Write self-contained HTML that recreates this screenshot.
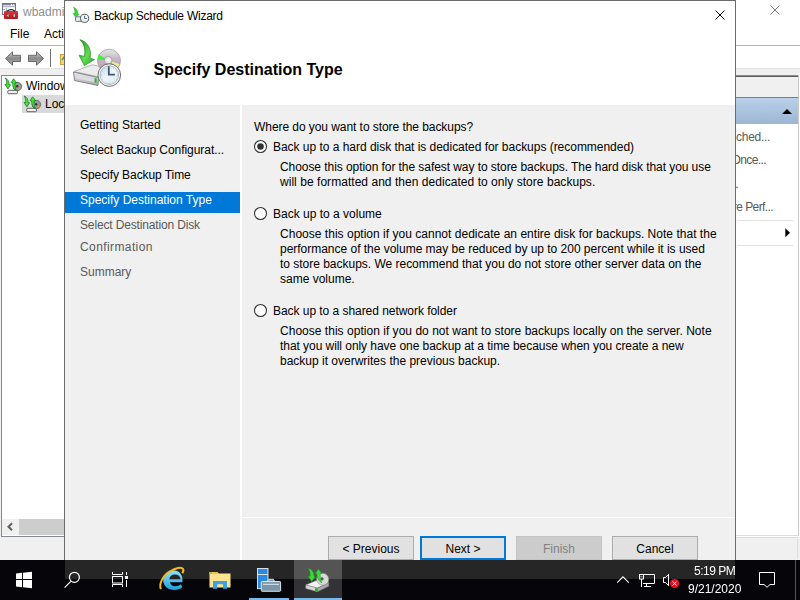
<!DOCTYPE html>
<html><head><meta charset="utf-8">
<style>
*{margin:0;padding:0;box-sizing:border-box}
html,body{width:800px;height:600px;overflow:hidden;background:#fff}
body{position:relative;font-family:"Liberation Sans",sans-serif;font-size:12px;color:#000}
.a{position:absolute}
svg.a{overflow:visible}
.t{position:absolute;white-space:nowrap;line-height:15px;font-size:12px}
.r{position:absolute;white-space:nowrap;line-height:15px;font-size:12px;text-align:right}
.btn{position:absolute;top:536px;width:86px;height:24px;background:#e1e1e1;border:1px solid #adadad;text-align:center;line-height:25px;font-size:12px;color:#000}
.g{color:#595959}
</style></head><body>

<!-- ================= MMC window behind ================= -->
<div class="a" style="left:0;top:0;width:800px;height:560px;background:#fff"></div>
<!-- MMC title icon -->
<svg class="a" style="left:0;top:0" width="24" height="24" viewBox="0 0 24 24">
  <defs><linearGradient id="tbx" x1="0" y1="0" x2="0" y2="1"><stop offset="0" stop-color="#e0383c"/><stop offset="1" stop-color="#b8151a"/></linearGradient></defs>
  <rect x="2.5" y="3.5" width="13" height="11" fill="#fff" stroke="#6f7687"/>
  <rect x="3" y="4" width="8" height="1.3" fill="#7c8598"/>
  <rect x="12" y="4" width="1.2" height="1.3" fill="#7c8598"/>
  <rect x="14" y="4" width="1.2" height="1.3" fill="#7c8598"/>
  <rect x="3" y="6.2" width="12" height="1" fill="#9ea5b3"/>
  <rect x="5.8" y="8" width="0.9" height="6" fill="#8a90a0"/>
  <rect x="3.6" y="9" width="1" height="1" fill="#555"/>
  <rect x="4" y="11" width="14" height="8" rx="1" fill="url(#tbx)"/>
  <path d="M7 11.2 Q11 8.2 15 11.2" fill="none" stroke="#1a1a1a" stroke-width="1.2"/>
  <rect x="7" y="14" width="1.6" height="3" fill="#cfdede" stroke="#555" stroke-width="0.3"/>
  <rect x="13.4" y="14" width="1.6" height="3" fill="#cfdede" stroke="#555" stroke-width="0.3"/>
</svg>
<div class="t" style="left:23px;top:5px;color:#8f8f8f">wbadmin - [Windows Server Backup (Local)\Local Backup]</div>
<!-- MMC close -->
<svg class="a" style="left:769px;top:4px" width="12" height="12" viewBox="0 0 12 12">
  <path d="M1.5 1.5 L10.5 10.5 M10.5 1.5 L1.5 10.5" stroke="#7a7a7a" stroke-width="1" fill="none"/>
</svg>
<!-- menu -->
<div class="t" style="left:10px;top:27px">File</div>
<div class="t" style="left:44px;top:27px">Action</div>
<div class="a" style="left:0;top:45px;width:800px;height:1px;background:#b3b3b3"></div>
<!-- toolbar -->
<svg class="a" style="left:0;top:46px" width="64" height="22" viewBox="0 46 64 22">
  <defs>
    <linearGradient id="arg" x1="0" y1="0" x2="0" y2="1">
      <stop offset="0" stop-color="#d0d0d0"/><stop offset="0.5" stop-color="#8a8a8a"/><stop offset="1" stop-color="#b0b0b0"/>
    </linearGradient>
  </defs>
  <path d="M5.5 58.5 L12.5 51.8 L12.5 55.3 L20.5 55.3 L20.5 61.5 L12.5 61.5 L12.5 65.2 Z" fill="url(#arg)" stroke="#6a6a6a" stroke-width="1"/>
  <path d="M43.5 58.5 L36.5 51.8 L36.5 55.3 L28.5 55.3 L28.5 61.5 L36.5 61.5 L36.5 65.2 Z" fill="url(#arg)" stroke="#6a6a6a" stroke-width="1"/>
  <rect x="50" y="49" width="1" height="18" fill="#6f6f6f"/>
  <rect x="60.5" y="54.5" width="8" height="10" fill="#f4d77a" stroke="#c9a43a"/>
  <path d="M62 60 L65 56 L66 58" stroke="#3fa63f" stroke-width="1.5" fill="none"/>
</svg>
<div class="a" style="left:0;top:68px;width:800px;height:1px;background:#e3e3e3"></div>
<div class="a" style="left:0;top:69px;width:800px;height:491px;background:#f0f0f0"></div>
<!-- tree pane -->
<div class="a" style="left:1px;top:75px;width:70px;height:462px;background:#fff;border:1px solid #828790;border-right:none"></div>
<svg class="a" style="left:4px;top:77px" width="18" height="18" viewBox="0 0 18 18">
  <circle cx="13.4" cy="9.5" r="4.2" fill="#9a9a9a" stroke="#4a4a4a" stroke-width="0.7"/>
  <circle cx="13.2" cy="9.3" r="1.2" fill="#333"/>
  <path d="M14 11.5 L16 10.6 L16.3 12.6 Z" fill="#f28a50"/>
  <rect x="3.8" y="13.3" width="9.6" height="3.4" rx="0.8" fill="#f4f4f4" stroke="#505050" stroke-width="0.9"/>
  <path d="M1.3 1 C3.8 2.2 5.3 4.6 5.1 7.6 L6.6 7.8 L3.9 11.9 L1 7.4 L2.6 7.5 C2.8 5 2.4 3 1.3 1 Z" fill="#36ec36" stroke="#1d6e1d" stroke-width="0.7"/>
  <path d="M9.6 1.8 L12.6 5.6 L11.1 5.7 C10.9 8.6 11.3 11.2 12.3 13.9 C9.6 12.4 8.5 9.2 8.7 5.8 L7 5.8 Z" fill="#36ec36" stroke="#1d6e1d" stroke-width="0.7"/>
</svg>
<div class="t" style="left:26px;top:79px">Windows Server Backup</div>
<div class="a" style="left:22px;top:95px;width:50px;height:18px;background:#d9d9d9"></div>
<svg class="a" style="left:23px;top:95px" width="18" height="18" viewBox="0 0 18 18">
  <circle cx="13.4" cy="9.5" r="4.2" fill="#9a9a9a" stroke="#4a4a4a" stroke-width="0.7"/>
  <circle cx="13.2" cy="9.3" r="1.2" fill="#333"/>
  <path d="M14 11.5 L16 10.6 L16.3 12.6 Z" fill="#f28a50"/>
  <rect x="3.8" y="13.3" width="9.6" height="3.4" rx="0.8" fill="#f4f4f4" stroke="#505050" stroke-width="0.9"/>
  <path d="M1.3 1 C3.8 2.2 5.3 4.6 5.1 7.6 L6.6 7.8 L3.9 11.9 L1 7.4 L2.6 7.5 C2.8 5 2.4 3 1.3 1 Z" fill="#36ec36" stroke="#1d6e1d" stroke-width="0.7"/>
  <path d="M9.6 1.8 L12.6 5.6 L11.1 5.7 C10.9 8.6 11.3 11.2 12.3 13.9 C9.6 12.4 8.5 9.2 8.7 5.8 L7 5.8 Z" fill="#36ec36" stroke="#1d6e1d" stroke-width="0.7"/>
</svg>
<div class="t" style="left:45px;top:97px">Local Backup</div>
<!-- tree scrollbar -->
<div class="a" style="left:2px;top:519px;width:17px;height:16px;background:#f0f0f0"></div>
<svg class="a" style="left:2px;top:519px" width="17" height="16" viewBox="0 0 17 16">
  <path d="M10 4.3 L6.5 7.8 L10 11.3" stroke="#606060" stroke-width="2" fill="none"/>
</svg>
<div class="a" style="left:19px;top:519px;width:50px;height:16px;background:#cdcdcd"></div>

<!-- right actions pane -->
<div class="a" style="left:736px;top:75px;width:64px;height:462px;background:#fff"></div>
<div class="a" style="left:736px;top:75px;width:62px;height:1px;background:#8a8a8a"></div>
<div class="a" style="left:736px;top:76px;width:62px;height:1px;background:#5e5e5e"></div>
<div class="a" style="left:736px;top:77px;width:62px;height:20px;background:#f0f0f0"></div>
<div class="a" style="left:736px;top:97px;width:62px;height:1px;background:#7d7d7d"></div>
<div class="a" style="left:736px;top:98px;width:62px;height:26px;background:linear-gradient(#b9d1ea,#9cb6d3)"></div>
<svg class="a" style="left:780px;top:106px" width="14" height="10" viewBox="0 0 14 10">
  <path d="M2 8 L7 3 L12 8 Z" fill="#000"/>
</svg>
<div class="a" style="left:798px;top:75px;width:1px;height:461px;background:#c8c8c8"></div>
<div class="a" style="left:736px;top:535px;width:63px;height:1px;background:#dcdcdc"></div>
<div class="a" style="left:736px;top:537px;width:62px;height:1px;background:#dcdcdc"></div>
<div class="a" style="left:736px;top:538px;width:64px;height:22px;background:#f0f0f0"></div>
<div class="a" style="left:797px;top:539px;width:1px;height:20px;background:#dcdcdc"></div>
<div class="r g" style="right:30px;top:130px;letter-spacing:-0.3px">Backup Sched...</div>
<div class="r g" style="right:34px;top:153px;letter-spacing:-0.6px">Backup Once...</div>
<div class="r g" style="right:62px;top:177px;letter-spacing:-0.6px">Recover...</div>
<div class="r g" style="right:27px;top:200px;letter-spacing:-0.6px">Configure Perf...</div>
<div class="a" style="left:737px;top:220px;width:56px;height:1px;background:#e3e3e3"></div>
<svg class="a" style="left:784px;top:227px" width="8" height="12" viewBox="0 0 8 12">
  <path d="M1.3 1.3 L6 5.8 L1.3 10.3 Z" fill="#000"/>
</svg>
<div class="a" style="left:737px;top:245px;width:56px;height:1px;background:#e3e3e3"></div>

<!-- ================= Wizard dialog ================= -->
<div class="a" style="left:64px;top:0;width:672px;height:580px;background:#f0f0f0;border:1px solid #6b6b6b"></div>
<div class="a" style="left:65px;top:1px;width:670px;height:104px;background:#fff"></div>
<!-- title icon -->
<svg class="a" style="left:70px;top:4px" width="24" height="24" viewBox="70 4 24 24">
  <path d="M73.6 7.2 C76.5 8.5 78 11 77.6 14 L79 14.3 L75.8 17.6 L73.2 13.4 L74.9 13.6 C75.2 11.2 74.6 9 73.6 7.2 Z" fill="#2fe02f" stroke="#1d8a1d" stroke-width="0.5"/>
  <rect x="75.5" y="16.8" width="7" height="4.6" rx="0.8" fill="#e8e8f0" stroke="#6b6b80" stroke-width="0.9"/>
  <circle cx="84.6" cy="18.3" r="4.1" fill="#e6f4f6" stroke="#555" stroke-width="1"/>
  <path d="M84.6 15.8 L84.6 18.5 L86.8 18.5" stroke="#465a70" stroke-width="0.9" fill="none"/>
</svg>
<div class="t" style="left:94px;top:9px;letter-spacing:-0.24px">Backup Schedule Wizard</div>
<svg class="a" style="left:713px;top:8px" width="14" height="14" viewBox="0 0 14 14">
  <path d="M2.5 2.5 L11.5 11.5 M11.5 2.5 L2.5 11.5" stroke="#000" stroke-width="1" fill="none"/>
</svg>
<!-- header big icon -->
<svg class="a" style="left:68px;top:32px" width="64" height="64" viewBox="68 32 64 64">
  <defs>
    <linearGradient id="garr" x1="0" y1="0" x2="1" y2="1">
      <stop offset="0" stop-color="#1f9a1f"/><stop offset="0.55" stop-color="#62db4f"/><stop offset="1" stop-color="#27ad27"/>
    </linearGradient>
    <linearGradient id="cd" x1="0" y1="0" x2="0" y2="1">
      <stop offset="0" stop-color="#e6e6e6"/><stop offset="0.45" stop-color="#bdbdbd"/><stop offset="1" stop-color="#9a9a9a"/>
    </linearGradient>
    <linearGradient id="face" x1="0" y1="0" x2="1" y2="1">
      <stop offset="0" stop-color="#c9dcea"/><stop offset="0.5" stop-color="#eef5f9"/><stop offset="1" stop-color="#d8e6ef"/>
    </linearGradient>
    <linearGradient id="drv" x1="0" y1="0" x2="0" y2="1">
      <stop offset="0" stop-color="#eeeeee"/><stop offset="1" stop-color="#a8a8ac"/>
    </linearGradient>
  </defs>
  <!-- drive -->
  <path d="M74 71.5 L92 64.8 L100.5 66.5 L99 77 Z" fill="#ececec" stroke="#a8a8a8" stroke-width="0.8"/>
  <path d="M73.5 72 L98.5 77.5 L98 85.5 L74.5 80.5 Z" fill="url(#drv)" stroke="#7a7a7a" stroke-width="0.9"/>
  <path d="M75.5 74 L94 78 L94 82 L76 78.5 Z" fill="#dcdce6"/>
  <rect x="94.6" y="78.2" width="2" height="4.3" fill="#18c818"/>
  <!-- arrow -->
  <path d="M80 39.7 C86.5 41.5 90.8 47.5 90.4 54 L90.1 58.3 L94.5 59.5 L84.4 65.6 L79.1 55.2 L84.3 56.4 C85.8 50 84.4 44 80 39.7 Z" fill="url(#garr)" stroke="#1f861f" stroke-width="0.7"/>
  <!-- cd -->
  <circle cx="109" cy="60.7" r="11.5" fill="url(#cd)" stroke="#8d8d8d" stroke-width="0.6"/>
  <path d="M109 60.7 L98.3 54.5 L97.7 59.5 Z" fill="#3ef03a"/>
  <path d="M109 60.7 L98 62.5 L99 66 Z" fill="#e79fd8" opacity="0.7"/>
  <path d="M109 60.7 L120 56 L120.5 60 Z" fill="#e79fd8" opacity="0.7"/>
  <path d="M109 60.7 L119.5 64 L117.5 68 Z" fill="#f3ee8a" opacity="0.9"/>
  <circle cx="108.2" cy="60.2" r="3.8" fill="#e4e4e4" stroke="#9a9a9a" stroke-width="0.8"/>
  <circle cx="108.2" cy="60.2" r="1.3" fill="#fff"/>
  <!-- clock -->
  <circle cx="109.3" cy="75.1" r="11.3" fill="#f4f4f4" stroke="#6e6e6e" stroke-width="1"/>
  <circle cx="109.3" cy="75.1" r="9.3" fill="url(#face)" stroke="#8a9aa8" stroke-width="0.6"/>
  <path d="M108.8 66.2 L108.8 74.6 L114.9 74.6" stroke="#3d5875" stroke-width="1.8" fill="none"/>
  <g fill="#8ea3b8">
    <circle cx="109.3" cy="67" r="0.5"/><circle cx="109.3" cy="83.2" r="0.5"/>
    <circle cx="101.2" cy="75.1" r="0.5"/><circle cx="117.4" cy="75.1" r="0.5"/>
    <circle cx="113.4" cy="68.1" r="0.4"/><circle cx="116.3" cy="71" r="0.4"/>
    <circle cx="116.3" cy="79.2" r="0.4"/><circle cx="113.4" cy="82.1" r="0.4"/>
    <circle cx="105.2" cy="82.1" r="0.4"/><circle cx="102.3" cy="79.2" r="0.4"/>
    <circle cx="102.3" cy="71" r="0.4"/><circle cx="105.2" cy="68.1" r="0.4"/>
  </g>
</svg>
<div class="t" style="left:89px;top:61px;font-size:16px;font-weight:bold;line-height:18px;left:153.5px">Specify Destination Type</div>
<!-- separators -->
<div class="a" style="left:240px;top:105px;width:2px;height:474px;background:#fff"></div>
<div class="a" style="left:242px;top:517px;width:493px;height:1px;background:#fff"></div>
<!-- nav -->
<div class="a" style="left:65px;top:192px;width:175px;height:21px;background:#0078d7"></div>
<div class="t" style="left:80px;top:118px">Getting Started</div>
<div class="t" style="left:80px;top:143px;letter-spacing:-0.050px">Select Backup Configurat...</div>
<div class="t" style="left:80px;top:168px;letter-spacing:-0.072px">Specify Backup Time</div>
<div class="t" style="left:80px;top:193px;color:#fff">Specify Destination Type</div>
<div class="t g" style="left:80px;top:218px;letter-spacing:-0.150px">Select Destination Disk</div>
<div class="t g" style="left:80px;top:240px;letter-spacing:0.400px">Confirmation</div>
<div class="t g" style="left:80px;top:265px">Summary</div>
<!-- radios -->
<svg class="a" style="left:254px;top:140px" width="13" height="13" viewBox="0 0 13 13">
  <circle cx="6.5" cy="6.5" r="6" fill="#fff" stroke="#333" stroke-width="1.1"/>
  <circle cx="6.5" cy="6.5" r="3.3" fill="#333"/>
</svg>
<svg class="a" style="left:254px;top:207px" width="13" height="13" viewBox="0 0 13 13">
  <circle cx="6.5" cy="6.5" r="6" fill="#fff" stroke="#333" stroke-width="1.1"/>
</svg>
<svg class="a" style="left:254px;top:304px" width="13" height="13" viewBox="0 0 13 13">
  <circle cx="6.5" cy="6.5" r="6" fill="#fff" stroke="#333" stroke-width="1.1"/>
</svg>
<!-- content -->
<div class="t" style="left:254px;top:120px;letter-spacing:-0.061px">Where do you want to store the backups?</div>
<div class="t" style="left:273px;top:140px;letter-spacing:-0.028px">Back up to a hard disk that is dedicated for backups (recommended)</div>
<div class="t" style="left:280px;top:160px;letter-spacing:-0.064px">Choose this option for the safest way to store backups. The hard disk that you use</div>
<div class="t" style="left:280px;top:175px;letter-spacing:0.041px">will be formatted and then dedicated to only store backups.</div>
<div class="t" style="left:273px;top:207px">Back up to a volume</div>
<div class="t" style="left:280px;top:227px;letter-spacing:0.020px">Choose this option if you cannot dedicate an entire disk for backups. Note that the</div>
<div class="t" style="left:280px;top:242px;letter-spacing:-0.018px">performance of the volume may be reduced by up to 200 percent while it is used</div>
<div class="t" style="left:280px;top:257px;letter-spacing:-0.016px">to store backups. We recommend that you do not store other server data on the</div>
<div class="t" style="left:280px;top:272px">same volume.</div>
<div class="t" style="left:273px;top:304px;letter-spacing:-0.045px">Back up to a shared network folder</div>
<div class="t" style="left:280px;top:324px;letter-spacing:0.025px">Choose this option if you do not want to store backups locally on the server. Note</div>
<div class="t" style="left:280px;top:339px;letter-spacing:-0.055px">that you will only have one backup at a time because when you create a new</div>
<div class="t" style="left:280px;top:354px">backup it overwrites the previous backup.</div>

<!-- buttons -->
<div class="btn" style="left:328px">&lt; Previous</div>
<div class="btn" style="left:420px;border:2px solid #0078d7;line-height:23px">Next &gt;</div>
<div class="btn" style="left:516px;background:#ccc;border-color:#c4c4c4;color:#838383">Finish</div>
<div class="btn" style="left:612px">Cancel</div>

<!-- ================= Taskbar ================= -->
<div class="a" style="left:0;top:560px;width:800px;height:40px;background:#05050a"></div>
<div class="a" style="left:65px;top:560px;width:670px;height:19px;background:#262626"></div>
<div class="a" style="left:294px;top:560px;width:48px;height:40px;background:#333337"></div>
<div class="a" style="left:294px;top:560px;width:48px;height:19px;background:#545454"></div>
<div class="a" style="left:249px;top:598px;width:40px;height:2px;background:#76b9ed"></div>
<div class="a" style="left:294px;top:598px;width:48px;height:2px;background:#76b9ed"></div>
<!-- start -->
<svg class="a" style="left:0;top:560px" width="48" height="40" viewBox="0 560 48 40">
  <path d="M16 573.6 L22 572.8 L22 579 L16 579 Z M23 572.7 L32 571.8 L32 579 L23 579 Z M16 580 L22 580 L22 587.2 L16 586.4 Z M23 580 L32 580 L32 588.2 L23 587.3 Z" fill="#fff"/>
</svg>
<!-- search -->
<svg class="a" style="left:48px;top:560px" width="48" height="40" viewBox="48 560 48 40">
  <circle cx="74.4" cy="577.3" r="5" fill="none" stroke="#fff" stroke-width="1.2"/>
  <path d="M64.6 587.6 L70.8 581.3" stroke="#fff" stroke-width="1.2"/>
</svg>
<!-- task view -->
<svg class="a" style="left:96px;top:560px" width="48" height="40" viewBox="96 560 48 40">
  <path d="M112.5 572 L112.5 574.5 L122.5 574.5 L122.5 572" stroke="#fff" stroke-width="1" fill="none"/>
  <rect x="112.5" y="576.5" width="10" height="6.5" stroke="#fff" stroke-width="1" fill="none"/>
  <path d="M112.5 587 L112.5 584.5 L122.5 584.5 L122.5 587" stroke="#fff" stroke-width="1" fill="none"/>
  <path d="M126.5 572 L126.5 575 M126.5 580 L126.5 587" stroke="#fff" stroke-width="1"/>
  <rect x="125" y="576" width="3" height="3" fill="#fff"/>
</svg>
<!-- IE -->
<svg class="a" style="left:150px;top:560px" width="40" height="40" viewBox="150 560 40 40">
  <defs>
    <linearGradient id="ieb" x1="0" y1="0" x2="0" y2="1">
      <stop offset="0" stop-color="#8fe3fb"/><stop offset="1" stop-color="#1c9fdf"/>
    </linearGradient>
  </defs>
  <path d="M182.3 582.3 L170 582.3 C170.6 585 172.3 586.2 175 586.2 C177.4 586.2 179.4 585.5 181 584.2 L182.3 587.2 C180.3 589 177.7 590 174.3 590 C167.8 590 163.2 586 163.2 580.3 C163.2 574.3 167.7 570.2 173.2 570.2 C178.7 570.2 182.5 574.2 182.5 580 Z M180.6 579.3 C180.3 576.2 178.2 574.5 175 574.5 C171.8 574.5 169.6 576.2 169.3 579.3 Z" fill="url(#ieb)" fill-rule="evenodd"/>
  <path d="M161 589 C158.8 585 162 576 170 571.3 C175.5 568 181.5 566.5 183 568.8 C183.8 570 183.2 571.8 182.3 573.2" fill="none" stroke="#f3b81e" stroke-width="2"/>
</svg>
<!-- explorer -->
<svg class="a" style="left:198px;top:560px" width="40" height="40" viewBox="198 560 40 40">
  <path d="M209.5 572 L217 572 L219 573.5 L230.5 573.5 L230.5 587.5 L209.5 587.5 Z" fill="#ffe38f"/>
  <path d="M209.5 572 L217 572 L219 574 L209.5 574 Z" fill="#f3c13a"/>
  <rect x="210.5" y="572.5" width="1.2" height="1.2" fill="#3aa0e0"/>
  <path d="M213 581 L227 581 L227 588.8 L223 588.8 L223 584.2 L217.2 584.2 L217.2 588.8 L213 588.8 Z" fill="#35a5e8"/>
</svg>
<!-- server manager -->
<svg class="a" style="left:246px;top:560px" width="48" height="40" viewBox="246 560 48 40">
  <rect x="257.5" y="568.5" width="10.5" height="20.2" fill="#2b8ae0" stroke="#e8f1f8" stroke-width="0.9"/>
  <path d="M257.5 574.5 L268 574.5" stroke="#e8f1f8" stroke-width="0.9"/>
  <path d="M267.5 581.5 L268.5 579.3 L273.5 579.3 L274.5 581.5" stroke="#e8f1f8" stroke-width="0.9" fill="#7a96ab"/>
  <rect x="261.3" y="581.5" width="19.3" height="9.8" rx="0.8" fill="#7a96ab" stroke="#f0f4f8" stroke-width="0.9"/>
  <path d="M263 584.3 L279 584.3" stroke="#eef2f5" stroke-width="0.9"/>
</svg>
<!-- wbadmin -->
<svg class="a" style="left:294px;top:560px" width="48" height="40" viewBox="294 560 48 40">
  <defs>
    <linearGradient id="wbd" x1="0" y1="0" x2="0" y2="1">
      <stop offset="0" stop-color="#fafafa"/><stop offset="1" stop-color="#a9a9a9"/>
    </linearGradient>
  </defs>
  <path d="M305.8 585 L317 580.3 L328.8 582.8 L317.5 588 Z" fill="#f2f2f2" stroke="#9a9a9a" stroke-width="0.5"/>
  <path d="M305.8 585 L317.5 588 L317.5 591.8 L305.8 588.6 Z" fill="#d9d9dc" stroke="#808080" stroke-width="0.5"/>
  <path d="M317.5 588 L328.8 582.8 L328.8 586.2 L317.5 591.8 Z" fill="#a8a8ac" stroke="#707070" stroke-width="0.5"/>
  <circle cx="322.7" cy="579.2" r="6" fill="#d8d8d8" stroke="#8a8a8a" stroke-width="0.6"/>
  <circle cx="322" cy="578.8" r="1.6" fill="#555"/>
  <circle cx="327" cy="581" r="0.8" fill="#f3ee8a"/>
  <path d="M308.3 568 C312 569.5 314.3 572.8 314 576.5 L315.3 576.7 L311.7 581.6 L308 576 L310.2 576.3 C310.4 573.3 309.7 570.5 308.3 568 Z" fill="#35e035" stroke="#1f8f1f" stroke-width="0.5"/>
  <path d="M318.5 569 L321.8 573.5 L320.2 573.6 C320 577 320.6 580 321.8 582.7 C318.3 581 316.8 577.5 316.9 573.7 L315.2 573.7 Z" fill="#35e035" stroke="#1f8f1f" stroke-width="0.5"/>
  <rect x="315" y="588.2" width="2" height="2.8" fill="#19c019"/>
</svg>
<!-- tray -->
<svg class="a" style="left:600px;top:560px" width="90" height="40" viewBox="600 560 90 40">
  <path d="M617.2 582.7 L623 576.8 L628.8 582.7" stroke="#fff" stroke-width="1.1" fill="none"/>
  <path d="M643.5 574.5 L654.5 574.5 L654.5 583.5 L643 583.5" stroke="#fff" stroke-width="1" fill="none"/>
  <rect x="639.5" y="574.5" width="4" height="4.5" stroke="#fff" stroke-width="1" fill="none"/>
  <path d="M640.6 576.2 L641.5 577.2 L642.4 576.2" stroke="#fff" stroke-width="0.7" fill="none"/>
  <path d="M641.5 579 L641.5 587 M646.5 583.5 L646.5 586.5 M644 586.5 L651 586.5" stroke="#fff" stroke-width="1" fill="none"/>
  <path d="M663.5 577.5 L665.5 577.5 L668.5 574.3 L668.5 585.7 L665.5 582.5 L663.5 582.5 Z" stroke="#fff" stroke-width="1" fill="none"/>
  <circle cx="674.6" cy="583.5" r="4.6" fill="#e81123"/>
  <path d="M672.6 581.5 L676.6 585.5 M676.6 581.5 L672.6 585.5" stroke="#fff" stroke-width="1"/>
</svg>
<div class="t" style="left:694px;top:564px;color:#fff;letter-spacing:-0.5px;will-change:transform">5:19 PM</div>
<div class="t" style="left:688px;top:582px;color:#fff;will-change:transform">9/21/2020</div>
<svg class="a" style="left:750px;top:560px" width="50" height="40" viewBox="750 560 50 40">
  <path d="M759.5 572.5 L774.5 572.5 L774.5 584.5 L770 584.5 L767 587.3 L764 584.5 L759.5 584.5 Z" stroke="#fff" stroke-width="1" fill="none"/>
</svg>
<div class="a" style="left:795px;top:560px;width:1px;height:40px;background:#555"></div>

</body></html>
